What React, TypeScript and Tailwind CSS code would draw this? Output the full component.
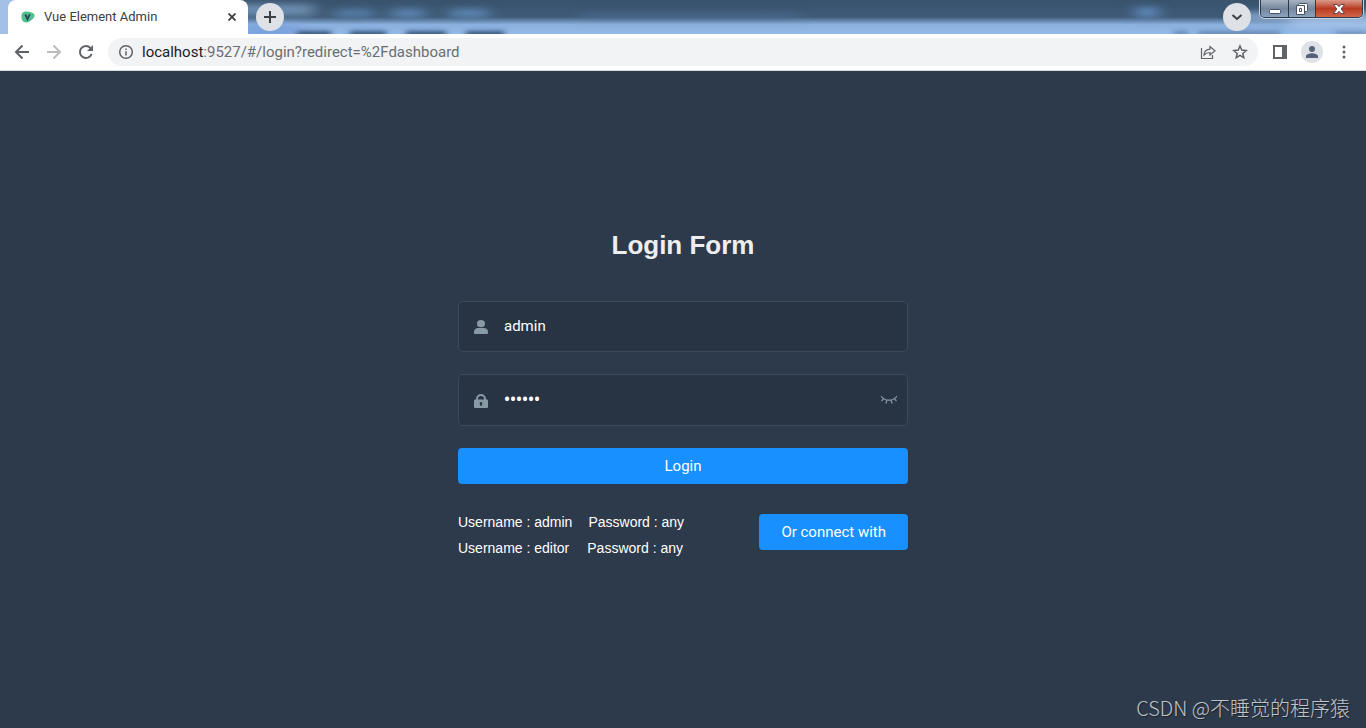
import { useState } from "react";
import type { FormEvent } from "react";

const WIN_BUTTON = "flex h-[17px] items-center justify-center border-[#2c3a4c] bg-linear-to-b";

function GlassBackdrop() {
  return (
    <svg
      aria-hidden="true"
      className="absolute inset-0 h-full w-full"
      viewBox="0 0 1366 34"
      preserveAspectRatio="none"
    >
      <defs>
        <linearGradient id="glass" x1="0" y1="0" x2="0" y2="1">
          <stop offset="0" stopColor="#39536d" />
          <stop offset="0.5" stopColor="#3f5a77" />
          <stop offset="0.72" stopColor="#8bb0de" />
          <stop offset="1" stopColor="#93bae8" />
        </linearGradient>
        <filter id="soft" filterUnits="userSpaceOnUse" x="-60" y="-40" width="1500" height="120">
          <feGaussianBlur stdDeviation="8 3" />
        </filter>
        <filter id="softer" filterUnits="userSpaceOnUse" x="-60" y="-40" width="1500" height="120">
          <feGaussianBlur stdDeviation="3 2" />
        </filter>
      </defs>
      <rect width="1366" height="34" fill="url(#glass)" />
      <g filter="url(#soft)">
        <rect x="-40" y="-20" width="90" height="80" fill="#a5c0e6" />
        <rect x="230" y="4" width="84" height="12" fill="#7598bd" opacity="0.8" />
        <rect x="240" y="24" width="60" height="14" fill="#7ba3dc" />
        <rect x="335" y="9" width="38" height="9" fill="#5b86b2" opacity="0.8" />
        <rect x="392" y="9" width="32" height="9" fill="#5b86b2" />
        <rect x="450" y="9" width="38" height="9" fill="#5b86b2" />
        <rect x="580" y="13" width="220" height="6" fill="#5580ab" opacity="0.4" />
        <rect x="1136" y="7" width="22" height="11" fill="#5f8abc" />
        <rect x="1240" y="12" width="180" height="10" fill="#88a8cd" opacity="0.9" />
        <rect x="1290" y="18" width="110" height="10" fill="#a9c6ec" opacity="0.8" />
      </g>
      <g filter="url(#softer)" fill="#35527a">
        <rect x="297" y="31" width="34" height="6" />
        <rect x="350" y="31" width="36" height="6" />
        <rect x="406" y="31" width="40" height="6" />
        <rect x="466" y="31" width="38" height="6" />
        <rect x="1174" y="31" width="14" height="5" opacity="0.5" />
        <rect x="1198" y="31" width="82" height="5" opacity="0.5" />
        <rect x="1336" y="31" width="30" height="5" opacity="0.4" />
      </g>
    </svg>
  );
}

function VueFavicon() {
  return (
    <svg className="h-4 w-4 shrink-0" viewBox="0 0 16 16" aria-hidden="true">
      <path
        d="M2.500 3.800C4.500 1.800 10.500 2.200 13.600 4.600C15.400 6 14.700 8.300 12.800 10C10.300 12.600 6.600 14.200 3.900 13C1.300 11.800 0.500 6 2.500 3.800Z"
        fill="#4fc08d"
      />
      <path d="M5.300 5.400L7.500 10.300L9.700 5.400" fill="none" stroke="#2b4658" strokeWidth="1.900" />
    </svg>
  );
}

function TabStrip() {
  return (
    <header className="relative flex h-[34px] justify-between overflow-hidden">
      <GlassBackdrop />
      <div className="relative flex">
        <div className="ml-2 flex w-60 items-center rounded-t-lg bg-white pr-2 pl-3">
          <VueFavicon />
          <span className="ml-2 flex-1 text-[13px] text-[#3c4043]">Vue Element Admin</span>
          <button type="button" aria-label="Close tab" className="flex h-4 w-4 items-center justify-center">
            <svg className="h-2 w-2" viewBox="0 0 8 8" stroke="#3c4043" strokeWidth="1.800">
              <path d="M0.500 0.500L7.500 7.500M7.500 0.500L0.500 7.500" />
            </svg>
          </button>
        </div>
        <button
          type="button"
          aria-label="New tab"
          className="mt-[3px] ml-2 flex h-7 w-7 items-center justify-center rounded-full bg-[#dee1e6]"
        >
          <svg className="h-3 w-3" viewBox="0 0 12 12" stroke="#3c4043" strokeWidth="2">
            <path d="M6 0V12M0 6H12" />
          </svg>
        </button>
      </div>
      <div className="relative flex items-start gap-[9px] pr-[3px]">
        <button
          type="button"
          aria-label="Search tabs"
          className="mt-[3px] flex h-7 w-7 items-center justify-center rounded-full bg-[#dee1e6]"
        >
          <svg className="h-3 w-3" viewBox="0 0 12 12" fill="none" stroke="#3c4043" strokeWidth="2">
            <path d="M1.500 4L6 8L10.500 4" />
          </svg>
        </button>
        <div className="flex overflow-hidden rounded-b-[5px] border border-t-0 border-[#2c3a4c] shadow-[0_0_0_1px_#c5d3e4]">
          <button type="button" aria-label="Minimize" className={`${WIN_BUTTON} w-7 border-r from-[#a9b4c2] via-[#75889f] to-[#8ba2bd]`}>
            <svg className="h-4 w-4" viewBox="0 0 16 16">
              <rect x="2.500" y="8.500" width="11" height="4" rx="1" fill="#fff" stroke="#475264" />
            </svg>
          </button>
          <button type="button" aria-label="Restore" className={`${WIN_BUTTON} w-[27px] border-r from-[#a9b4c2] via-[#75889f] to-[#8ba2bd]`}>
            <svg className="h-4 w-4" viewBox="0 0 16 16">
              <rect x="4.500" y="2.500" width="9" height="8" rx="1" fill="#fff" stroke="#475264" />
              <path d="M2.500 4.500H10.500V13.500H2.500ZM5.500 7.500V10.500H7.500V7.500Z" fill="#fff" fillRule="evenodd" stroke="#475264" />
            </svg>
          </button>
          <button type="button" aria-label="Close" className={`${WIN_BUTTON} w-[46px] from-[#d99a8b] via-[#b93a22] to-[#d0664a]`}>
            <svg className="h-4 w-4" viewBox="0 0 16 16">
              <path
                d="M2.500 3.500H6L8 5.700L10 3.500H13.500L10.200 8L13.500 12.500H10L8 10.300L6 12.500H2.500L5.800 8Z"
                fill="#fff"
                stroke="#5b4450"
              />
            </svg>
          </button>
        </div>
      </div>
    </header>
  );
}

function Toolbar() {
  return (
    <nav className="flex h-[37px] items-center border-b border-[#d5dbdd] bg-white pr-3.5 pl-3.5">
      <div className="flex gap-4">
        <button type="button" aria-label="Back">
          <svg className="h-4 w-4" viewBox="0 0 16 16" fill="none" stroke="#5f6368" strokeWidth="2">
            <path d="M15 8H2.500M8.500 1.500L2 8L8.500 14.500" />
          </svg>
        </button>
        <button type="button" aria-label="Forward">
          <svg className="h-4 w-4" viewBox="0 0 16 16" fill="none" stroke="#babcbe" strokeWidth="2">
            <path d="M1 8H13.500M7.500 1.500L14 8L7.500 14.500" />
          </svg>
        </button>
        <button type="button" aria-label="Reload">
          <svg className="h-4 w-4" viewBox="0 0 16 16" fill="none" stroke="#5f6368" strokeWidth="2">
            <path d="M13.600 10A6 6 0 1 1 12.500 4.100" />
            <path d="M15 1V7H9Z" fill="#5f6368" stroke="none" />
          </svg>
        </button>
      </div>
      <div className="ml-3.5 flex h-7 min-w-0 flex-1 items-center rounded-full bg-[#f1f3f4] px-2.5">
        <button type="button" aria-label="View site information">
          <svg className="h-4 w-4" viewBox="0 0 16 16" fill="none" stroke="#5f6368" strokeWidth="1.500">
            <circle cx="8" cy="8" r="6.300" />
            <path d="M8 7.200V11.500M8 4.400V6" />
          </svg>
        </button>
        <span className="ml-2 flex-1 text-[15px] leading-5 whitespace-nowrap text-[#6a6e73]">
          <span className="text-[#202124]">localhost</span>:9527/#/login?redirect=%2Fdashboard
        </span>
        <div className="flex items-center gap-4">
          <button type="button" aria-label="Share">
            <svg className="h-4 w-4" viewBox="0 0 16 16" fill="none" stroke="#5f6368" strokeWidth="1.200">
              <path d="M1.500 4V14.500H12.500V11" />
              <path d="M4 11C4.300 7.500 6.500 5.500 10 5.200V2.500L15 6.800L10 11V8.500C7.500 8.500 5.500 9.300 4 11Z" />
            </svg>
          </button>
          <button type="button" aria-label="Bookmark this tab">
            <svg className="h-4 w-4" viewBox="0 0 16 16" fill="none" stroke="#5f6368" strokeWidth="1.500">
              <path d="M8 2L9.700 6.100L14.200 6.500L10.800 9.400L11.800 13.700L8 11.400L4.200 13.700L5.200 9.400L1.800 6.500L6.300 6.100Z" />
            </svg>
          </button>
        </div>
      </div>
      <div className="ml-3.5 flex items-center gap-[13px]">
        <button type="button" aria-label="Side panel">
          <svg className="h-4 w-4" viewBox="0 0 16 16">
            <path d="M1 1H15V15H1ZM3 3V13H10V3Z" fill="#5f6368" fillRule="evenodd" />
          </svg>
        </button>
        <button type="button" aria-label="Profile" className="flex h-[22px] w-[22px] items-center justify-center rounded-full bg-[#dee1e6]">
          <svg className="h-3.5 w-3.5" viewBox="0 0 14 14" fill="#56637a">
            <circle cx="7" cy="4" r="3" />
            <path d="M1 13V11.200C1 9.200 4.500 8.200 7 8.200S13 9.200 13 11.200V13Z" />
          </svg>
        </button>
        <button type="button" aria-label="Menu">
          <svg className="h-4 w-4" viewBox="0 0 16 16" fill="#5f6368">
            <circle cx="8" cy="3" r="1.500" />
            <circle cx="8" cy="8" r="1.500" />
            <circle cx="8" cy="13" r="1.500" />
          </svg>
        </button>
      </div>
    </nav>
  );
}

const FIELD = "flex items-center rounded-[5px] border border-[#3e4a5a] bg-[#283443]";
const FIELD_INPUT = "h-12 min-w-0 flex-1 bg-transparent px-4 pb-0.5 text-white outline-none";
const PRIMARY_BUTTON = "h-9 rounded bg-[#1890ff] text-[15px] text-white";

function LoginForm() {
  const [username, setUsername] = useState("admin");
  const [password, setPassword] = useState("111111");
  const [showPassword, setShowPassword] = useState(false);

  const onSubmit = (e: FormEvent) => e.preventDefault();

  return (
    <form onSubmit={onSubmit} className="mx-auto w-full max-w-[450px] pt-[159px]">
      <h3 className="mb-[41px] text-center font-['Liberation_Sans',sans-serif] text-[26px] leading-[30px] font-bold text-[#eee]">
        Login Form
      </h3>

      <div className={`${FIELD} mb-[22px] h-[51px]`}>
        <label htmlFor="username" aria-label="Username" className="pl-[15px]">
          <svg className="h-3.5 w-3.5" viewBox="0 0 14 14" fill="#889aa4">
            <ellipse cx="7" cy="3.700" rx="4" ry="3.600" />
            <path d="M0 13V12C0 9.500 1.800 8 4 8H10C12.200 8 14 9.500 14 12V13Q14 14 13 14H1Q0 14 0 13Z" />
          </svg>
        </label>
        <input
          id="username"
          type="text"
          value={username}
          onChange={(e) => setUsername(e.target.value)}
          className={`${FIELD_INPUT} text-[15px]`}
        />
      </div>

      <div className={`${FIELD} mb-[22px] h-[52px]`}>
        <label htmlFor="password" aria-label="Password" className="pt-0.5 pl-[15px]">
          <svg className="h-3.5 w-3.5" viewBox="0 0 14 14" fill="#889aa4">
            <path d="M2 6V5A5 5 0 0 1 12 5V6H10V5A3 3 0 0 0 4 5V6Z" />
            <path
              d="M1 5.500H13Q14 5.500 14 6.500V13Q14 14 13 14H1Q0 14 0 13V6.500Q0 5.500 1 5.500ZM7 8A1.500 1.500 0 0 0 6.300 10.700V12H7.700V10.700A1.500 1.500 0 0 0 7 8Z"
              fillRule="evenodd"
            />
          </svg>
        </label>
        <input
          id="password"
          type={showPassword ? "text" : "password"}
          value={password}
          onChange={(e) => setPassword(e.target.value)}
          className={`${FIELD_INPUT} font-['Open_Sans',sans-serif] text-[16px] font-semibold`}
        />
        <button
          type="button"
          aria-label="Toggle password"
          onClick={() => setShowPassword((prev) => !prev)}
          className="pr-2.5"
        >
          <svg className="h-4 w-4" viewBox="0 0 16 16" fill="none" stroke="#889aa4" strokeWidth="1.200">
            <path d="M0 4C4 9.500 12 9.500 16 4M2.800 6.700L0.500 9M5.800 8L5 11.500M10.200 8L11 11.500M13.200 6.700L15.500 9" />
          </svg>
        </button>
      </div>

      <button type="submit" className={`${PRIMARY_BUTTON} mb-[30px] w-full`}>
        Login
      </button>

      <div className="flex items-start justify-between">
        <div className="-mt-[5px] font-['Liberation_Sans',sans-serif] text-[14px] leading-[26px] text-white">
          <p>
            <span className="mr-4">Username : admin</span>
            <span>Password : any</span>
          </p>
          <p>
            <span className="mr-[18px]">Username : editor</span>
            <span>Password : any</span>
          </p>
        </div>
        <button type="button" className={`${PRIMARY_BUTTON} px-[22px]`}>
          Or connect with
        </button>
      </div>
    </form>
  );
}

export default function App() {
  return (
    <div className="flex min-h-screen flex-col bg-[#2d3a4b] font-[Roboto,sans-serif]">
      <TabStrip />
      <Toolbar />
      <main className="relative flex-1 overflow-hidden px-4">
        <LoginForm />
        <span className="absolute right-4 bottom-1.5 font-['Noto_Sans_CJK_SC',sans-serif] text-[20px] leading-7 font-light text-[#c0c4ca] [text-shadow:1px_1px_1px_#1a222c]">
          CSDN @不睡觉的程序猿
        </span>
      </main>
    </div>
  );
}
